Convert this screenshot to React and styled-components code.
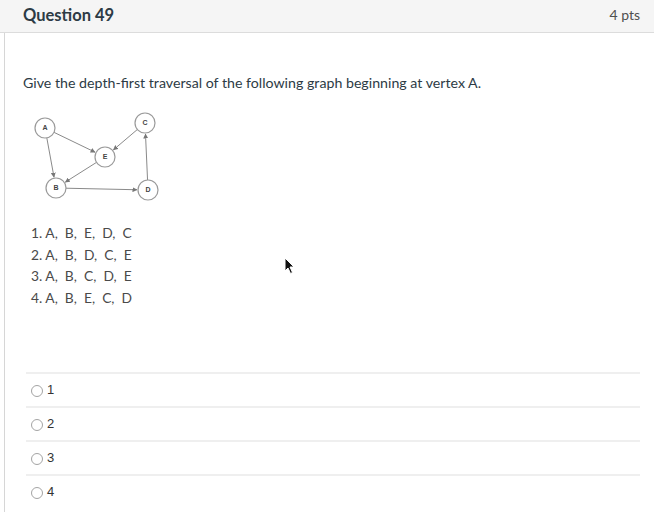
import React from 'react'
import styled, { createGlobalStyle } from 'styled-components'

const Global = createGlobalStyle`
  html, body {
    margin: 0;
    padding: 0;
    background: #fff;
  }
  body {
    font-family: Lato, "Open Sans", "Liberation Sans", sans-serif;
    color: #2d3b45;
  }
`

const Page = styled.div`
  position: relative;
  width: 654px;
  height: 512px;
  overflow: hidden;
  background: #fff;
`

const Card = styled.div`
  margin-left: 4px;
  height: 512px;
  border-left: 1px solid #d6d6d6;
`

const Header = styled.div`
  height: 33px;
  box-sizing: border-box;
  background: #f5f5f5;
  border-bottom: 1px solid #dcdcdc;
  display: flex;
  align-items: center;
  justify-content: space-between;
  margin-left: -5px;
  padding: 0 14px 3px 23px;
`

const Title = styled.div`
  font-size: 16.5px;
  font-weight: 700;
  color: #2d3b45;
`

const Points = styled.div`
  font-size: 14px;
  font-weight: 400;
  color: #4f4f4f;
`

const Body = styled.div`
  padding: 0 14px 0 18px;
`

const Prompt = styled.p`
  margin: 40px 0 0;
  font-size: 14.2px;
  line-height: 20px;
  color: #2d3b45;
`

const GraphBox = styled.div`
  margin-top: 12px;
  margin-left: 4px;
  height: 100px;
`

const Choices = styled.ol`
  list-style: none;
  margin: 17px 0 0;
  padding: 0 0 0 8px;
  font-size: 13.8px;
  line-height: 21.7px;
  color: #4a4a4a;
  white-space: pre;
`

const Answers = styled.div`
  margin-top: 63px;
  margin-left: 3px;
`

const AnswerRow = styled.label`
  display: flex;
  align-items: center;
  height: 32px;
  border-top: 2px solid #efefef;
  padding-left: 5px;
  font-family: "Liberation Sans", Arial, sans-serif;
  font-size: 13px;
  color: #333;
`

const Radio = styled.span`
  width: 10px;
  height: 10px;
  border: 1px solid #a4a4a4;
  border-radius: 50%;
  margin-right: 4px;
  margin-top: 2px;
  background: #fff;
`

const Cursor = styled.svg`
  position: absolute;
  left: 284px;
  top: 257px;
`

const nodes = {
  A: [18, 23],
  C: [118, 18],
  E: [78, 52],
  B: [29, 83],
  D: [121, 85]
}

const edges = [
  ['A', 'E'],
  ['A', 'B'],
  ['C', 'E'],
  ['E', 'B'],
  ['B', 'D'],
  ['D', 'C']
]

const R = 10

function Graph() {
  return (
    <svg width="150" height="100" viewBox="0 0 150 100">
      <defs>
        <marker id="ah" markerWidth="5" markerHeight="5" refX="4.5" refY="2.5" orient="auto">
          <path d="M0,0 L5,2.5 L0,5 z" fill="#777" />
        </marker>
      </defs>
      {edges.map(([f, t]) => {
        const [x1, y1] = nodes[f]
        const [x2, y2] = nodes[t]
        const dx = x2 - x1
        const dy = y2 - y1
        const len = Math.hypot(dx, dy)
        const ux = dx / len
        const uy = dy / len
        return (
          <line
            key={f + t}
            x1={x1 + ux * R}
            y1={y1 + uy * R}
            x2={x2 - ux * (R + 1)}
            y2={y2 - uy * (R + 1)}
            stroke="#8a8a8a"
            strokeWidth="1"
            markerEnd="url(#ah)"
          />
        )
      })}
      {Object.entries(nodes).map(([k, [x, y]]) => (
        <g key={k}>
          <circle cx={x} cy={y} r={R} fill="#fff" stroke="#9a9a9a" strokeWidth="1.2" />
          <text
            x={x}
            y={y + 2.4}
            textAnchor="middle"
            fontSize="7"
            fontWeight="700"
            fontFamily="Liberation Sans, Arial, sans-serif"
            fill="#444"
          >
            {k}
          </text>
        </g>
      ))}
    </svg>
  )
}

const options = [
  '1. A,  B,  E,  D,  C',
  '2. A,  B,  D,  C,  E',
  '3. A,  B,  C,  D,  E',
  '4. A,  B,  E,  C,  D'
]

export default function App() {
  return (
    <Page>
      <Global />
      <Card>
        <Header>
          <Title>Question 49</Title>
          <Points>4 pts</Points>
        </Header>
        <Body>
          <Prompt>Give the depth-first traversal of the following graph beginning at vertex A.</Prompt>
          <GraphBox>
            <Graph />
          </GraphBox>
          <Choices>
            {options.map(o => (
              <li key={o}>{o}</li>
            ))}
          </Choices>
          <Answers>
            {['1', '2', '3', '4'].map(n => (
              <AnswerRow key={n}>
                <Radio />
                {n}
              </AnswerRow>
            ))}
          </Answers>
        </Body>
      </Card>
      <Cursor width="12" height="18" viewBox="0 0 12 18">
        <path d="M1,1 L1,14 L4,11 L6.5,16.5 L8.5,15.5 L6,10 L10,10 Z" fill="#111" stroke="#fff" strokeWidth="1" />
      </Cursor>
    </Page>
  )
}
